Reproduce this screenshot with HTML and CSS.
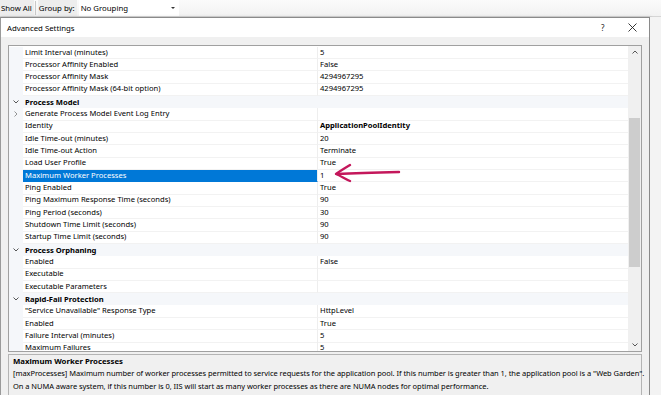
FILE: index.html
```html
<!DOCTYPE html>
<html>
<head>
<meta charset="utf-8">
<link rel="stylesheet" href="styles.css">
</head>
<body>
<div class="toolbar">
  <span class="tb-item">Show All</span>
  <span class="tb-sep"></span>
  <span class="tb-item">Group by:</span>
  <div class="dropdown"><span>No Grouping</span><span class="caret"></span></div>
</div>
<div class="stage">
  <div class="dialog">
    <div class="titlebar">
      <span class="title">Advanced Settings</span>
      <span class="help">?</span>
      <svg class="close" width="9" height="9" viewBox="0 0 9 9"><path d="M0.5 0.5L8.5 8.5M8.5 0.5L0.5 8.5" stroke="#222" stroke-width="0.9" fill="none"/></svg>
    </div>
    <div class="body">
      <div class="grid">
        <div class="rows">
          <div class="row"><span class="gut"></span><span class="name">Limit Interval (minutes)</span><span class="val">5</span></div>
          <div class="row"><span class="gut"></span><span class="name">Processor Affinity Enabled</span><span class="val">False</span></div>
          <div class="row"><span class="gut"></span><span class="name">Processor Affinity Mask</span><span class="val">4294967295</span></div>
          <div class="row"><span class="gut"></span><span class="name">Processor Affinity Mask (64-bit option)</span><span class="val">4294967295</span></div>
          <div class="row cat"><span class="gut"><svg width="6" height="4" viewBox="0 0 6 4"><path d="M0.5 0.5L3 3L5.5 0.5" stroke="#444" stroke-width="0.9" fill="none"/></svg></span><span class="name">Process Model</span></div>
          <div class="row"><span class="gut"><svg width="4" height="6" viewBox="0 0 4 6"><path d="M0.5 0.5L3 3L0.5 5.5" stroke="#888" stroke-width="0.9" fill="none"/></svg></span><span class="name">Generate Process Model Event Log Entry</span><span class="val"></span></div>
          <div class="row"><span class="gut"></span><span class="name">Identity</span><span class="val bold">ApplicationPoolIdentity</span></div>
          <div class="row"><span class="gut"></span><span class="name">Idle Time-out (minutes)</span><span class="val">20</span></div>
          <div class="row"><span class="gut"></span><span class="name">Idle Time-out Action</span><span class="val">Terminate</span></div>
          <div class="row"><span class="gut"></span><span class="name">Load User Profile</span><span class="val">True</span></div>
          <div class="row sel"><span class="gut"></span><span class="name">Maximum Worker Processes</span><span class="val">1</span></div>
          <div class="row"><span class="gut"></span><span class="name">Ping Enabled</span><span class="val">True</span></div>
          <div class="row"><span class="gut"></span><span class="name">Ping Maximum Response Time (seconds)</span><span class="val">90</span></div>
          <div class="row"><span class="gut"></span><span class="name">Ping Period (seconds)</span><span class="val">30</span></div>
          <div class="row"><span class="gut"></span><span class="name">Shutdown Time Limit (seconds)</span><span class="val">90</span></div>
          <div class="row"><span class="gut"></span><span class="name">Startup Time Limit (seconds)</span><span class="val">90</span></div>
          <div class="row cat"><span class="gut"><svg width="6" height="4" viewBox="0 0 6 4"><path d="M0.5 0.5L3 3L5.5 0.5" stroke="#444" stroke-width="0.9" fill="none"/></svg></span><span class="name">Process Orphaning</span></div>
          <div class="row"><span class="gut"></span><span class="name">Enabled</span><span class="val">False</span></div>
          <div class="row"><span class="gut"></span><span class="name">Executable</span><span class="val"></span></div>
          <div class="row"><span class="gut"></span><span class="name">Executable Parameters</span><span class="val"></span></div>
          <div class="row cat"><span class="gut"><svg width="6" height="4" viewBox="0 0 6 4"><path d="M0.5 0.5L3 3L5.5 0.5" stroke="#444" stroke-width="0.9" fill="none"/></svg></span><span class="name">Rapid-Fail Protection</span></div>
          <div class="row"><span class="gut"></span><span class="name">"Service Unavailable" Response Type</span><span class="val">HttpLevel</span></div>
          <div class="row"><span class="gut"></span><span class="name">Enabled</span><span class="val">True</span></div>
          <div class="row"><span class="gut"></span><span class="name">Failure Interval (minutes)</span><span class="val">5</span></div>
          <div class="row"><span class="gut"></span><span class="name">Maximum Failures</span><span class="val">5</span></div>
        </div>
        <div class="scrollbar">
          <div class="sb-btn"><svg width="6" height="4" viewBox="0 0 6 4"><path d="M0.5 3.5L3 1L5.5 3.5" stroke="#555" stroke-width="1" fill="none"/></svg></div>
          <div class="sb-track"><div class="sb-thumb"></div></div>
          <div class="sb-btn"><svg width="6" height="4" viewBox="0 0 6 4"><path d="M0.5 0.5L3 3L5.5 0.5" stroke="#555" stroke-width="1" fill="none"/></svg></div>
        </div>
      </div>
      <div class="desc">
        <div class="desc-title">Maximum Worker Processes</div>
        <div class="desc-text">[maxProcesses] Maximum number of worker processes permitted to service requests for the application pool. If this number is greater than 1, the application pool is a "Web Garden".<br>On a NUMA aware system, if this number is 0, IIS will start as many worker processes as there are NUMA nodes for optimal performance.</div>
      </div>
    </div>
  </div>
  <div class="side"></div>
  <svg class="arrow" width="80" height="26" viewBox="0 0 80 26">
    <path d="M17 3 C12 6 7 9 3 12 C8 14 12 17 17 19" stroke="#c4175b" stroke-width="2.4" fill="none" stroke-linecap="round" stroke-linejoin="round"/>
    <path d="M4 12 C25 11 45 10.5 66 10" stroke="#c4175b" stroke-width="2.4" fill="none" stroke-linecap="round"/>
  </svg>
</div>
</body>
</html>
```

FILE: styles.css
```css
* { box-sizing: border-box; }
html, body { margin: 0; padding: 0; }
body {
  width: 661px;
  height: 395px;
  overflow: hidden;
  background: #f0f0f0;
  font-family: "Noto Sans", "Open Sans", sans-serif;
  font-size: 7.6px;
  color: #000;
}
.toolbar {
  height: 17px;
  display: flex;
  align-items: center;
  background: linear-gradient(#fbfbfb, #f2f2f2);
  border-bottom: 1px solid #d5d5d5;
}
.tb-item {
  height: 16px;
  line-height: 16px;
  padding: 0 2px 0 1px;
  background: #ededed;
  font-size: 7.8px;
}
.tb-sep {
  width: 1px;
  height: 14px;
  background: #c8c8c8;
  margin: 0 2px 0 1px;
}
.dropdown {
  margin-left: 2px;
  width: 100px;
  height: 16px;
  background: #fff;
  display: flex;
  align-items: center;
  justify-content: space-between;
  padding: 0 4px 0 2px;
  font-size: 7.8px;
}
.caret {
  width: 0; height: 0;
  border-left: 2px solid transparent;
  border-right: 2px solid transparent;
  border-top: 2px solid #333;
}
.stage {
  position: relative;
  display: flex;
  height: 378px;
}
.dialog {
  width: 650px;
  height: 378px;
  border-left: 1px solid #9a9a9a;
  border-top: 1px solid #8a8a8a;
  border-right: 1px solid #8a8a8a;
  background: #f0f0f0;
  box-shadow: 1px 0 3px rgba(0,0,0,0.15);
  display: flex;
  flex-direction: column;
}
.side { flex: 1; background: #f3f3f3; }
.titlebar {
  height: 19px;
  background: #fff;
  display: flex;
  align-items: center;
  padding-left: 6px;
  font-size: 7.8px;
}
.title { flex: 1; }
.help { width: 20px; font-size: 8px; color: #222; }
.close { margin-right: 12px; margin-left: 7px; }
.body {
  flex: 1;
  padding: 8px 7px 0 7px;
  display: flex;
  flex-direction: column;
  gap: 2px;
}
.grid {
  height: 307px;
  border: 1px solid #a0a0a0;
  background: #fff;
  display: flex;
  overflow: hidden;
}
.rows { flex: 1; display: flex; flex-direction: column; padding-top: 0.5px; }
.row {
  display: grid;
  grid-template-columns: 14px 295px 1fr;
  height: 12.33px;
  flex: none;
  line-height: 12.33px;
  white-space: nowrap;
}
.gut {
  background: #f5f7fa;
  display: flex;
  align-items: center;
  justify-content: center;
}
.name {
  padding-left: 2px;
  border-bottom: 1px solid #f2f2f2;
  border-right: 1px solid #eeeeee;
  line-height: 11.6px;
}
.val {
  padding-left: 2px;
  border-bottom: 1px solid #f2f2f2;
  line-height: 11.6px;
}
.bold { font-weight: bold; }
.cat { background: #f5f7fa; grid-template-columns: 14px 1fr; }
.cat .name { font-weight: bold; border: none; line-height: 12.33px; }
.sel .name { background: #0078d7; color: #fff; border-bottom-color: #0078d7; }
.scrollbar {
  width: 13px;
  background: #f0f0f0;
  display: flex;
  flex-direction: column;
}
.sb-btn {
  height: 12px;
  display: flex;
  align-items: center;
  justify-content: center;
}
.sb-track { flex: 1; padding-top: 60px; }
.sb-thumb { height: 149px; margin: 0 1px; background: #cdcdcd; }
.desc {
  flex: 1;
  border: 1px solid #b4b4b4;
  border-bottom: none;
  padding: 0 3px 0 4px;
  line-height: 12.3px;
}
.desc-title { font-weight: bold; font-size: 7.8px; }
.desc-text { font-size: 7.5px; letter-spacing: -0.05px; white-space: nowrap; }
.arrow {
  position: absolute;
  left: 333px;
  top: 145px;
}
```
